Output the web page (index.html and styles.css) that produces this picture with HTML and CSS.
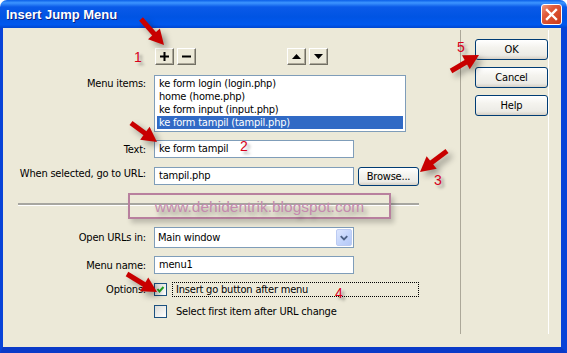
FILE: index.html
```html
<!DOCTYPE html>
<html lang="en">
<head>
    <meta charset="UTF-8">
    <title>Insert Jump Menu</title>
    <link rel="stylesheet" href="styles.css">
</head>
<body>
    <div class="window">
        <div class="titlebar">
            <span class="title">Insert Jump Menu</span>
            <span class="close">
                <svg width="21" height="21" viewBox="0 0 21 21"><path d="M6 6 L15 15 M15 6 L6 15" stroke="#fff" stroke-width="2.4" stroke-linecap="square"/></svg>
            </span>
        </div>

        <div class="client">
            <div class="main">
                <div class="row tools-row">
                    <div class="label"></div>
                    <div class="tools">
                        <span class="tool"><svg width="11" height="11" viewBox="0 0 11 11"><path d="M5.5 1 V10 M1 5.5 H10" stroke="#000" stroke-width="2"/></svg></span>
                        <span class="tool"><svg width="11" height="11" viewBox="0 0 11 11"><path d="M1 5.5 H10" stroke="#000" stroke-width="2"/></svg></span>
                    </div>
                    <div class="tools move">
                        <span class="tool"><svg width="11" height="11" viewBox="0 0 11 11"><path d="M1 8 L5.5 3 L10 8 Z" fill="#000"/></svg></span>
                        <span class="tool"><svg width="11" height="11" viewBox="0 0 11 11"><path d="M1 3 L5.5 8 L10 3 Z" fill="#000"/></svg></span>
                    </div>
                </div>

                <div class="row items-row">
                    <div class="label top">Menu items:</div>
                    <ul class="listbox">
                        <li>ke form login (login.php)</li>
                        <li>home (home.php)</li>
                        <li>ke form input (input.php)</li>
                        <li class="selected">ke form tampil (tampil.php)</li>
                    </ul>
                </div>

                <div class="row text-row">
                    <div class="label">Text:</div>
                    <div class="field">ke form tampil</div>
                </div>

                <div class="row url-row">
                    <div class="label">When selected, go to URL:</div>
                    <div class="field">tampil.php</div>
                    <span class="btn browse">Browse...</span>
                </div>

                <div class="separator"></div>

                <div class="row open-row">
                    <div class="label">Open URLs in:</div>
                    <div class="select">
                        <span>Main window</span>
                        <span class="drop"><svg width="15" height="17" viewBox="0 0 15 17"><path d="M4 7 L7.5 10.5 L11 7" stroke="#4d6185" stroke-width="2" fill="none"/></svg></span>
                    </div>
                </div>

                <div class="row name-row">
                    <div class="label">Menu name:</div>
                    <div class="field">menu1</div>
                </div>

                <div class="row option-row">
                    <div class="label">Options:</div>
                    <span class="check"><svg width="11" height="11" viewBox="0 0 11 11"><path d="M2.5 5 L4.5 7.5 L8.5 3" stroke="#21a121" stroke-width="2" fill="none"/></svg></span>
                    <span class="option-text focused">Insert go button after menu</span>
                </div>

                <div class="row option-row second">
                    <div class="label"></div>
                    <span class="check"></span>
                    <span class="option-text">Select first item after URL change</span>
                </div>
            </div>

            <div class="side">
                <span class="btn">OK</span>
                <span class="btn">Cancel</span>
                <span class="btn">Help</span>
            </div>
        </div>

        <!-- annotations drawn over the screenshot -->
        <div class="watermark">www.dehidentrik.blogspot.com</div>
        <svg class="arrows" width="567" height="353" viewBox="0 0 567 353">
            <g fill="#c80000" stroke="#c80000">
                <line x1="141" y1="19" x2="156" y2="36" stroke-width="5"/>
                <polygon points="0,0 -15,-8 -15,8" stroke="none" transform="translate(164 45) rotate(48)"/>

                <line x1="131" y1="123" x2="146" y2="134" stroke-width="5"/>
                <polygon points="0,0 -15,-8 -15,8" stroke="none" transform="translate(157 142) rotate(36)"/>

                <line x1="447" y1="151" x2="431" y2="163" stroke-width="5"/>
                <polygon points="0,0 -15,-8 -15,8" stroke="none" transform="translate(420 172) rotate(141)"/>

                <line x1="127" y1="274" x2="145" y2="285" stroke-width="5"/>
                <polygon points="0,0 -15,-8 -15,8" stroke="none" transform="translate(157 292) rotate(31)"/>

                <line x1="451" y1="71" x2="468" y2="61" stroke-width="5"/>
                <polygon points="0,0 -15,-8 -15,8" stroke="none" transform="translate(479 55) rotate(-29)"/>
            </g>
        </svg>
        <span class="note n1">1</span>
        <span class="note n2">2</span>
        <span class="note n3">3</span>
        <span class="note n4">4</span>
        <span class="note n5">5</span>
    </div>
</body>
</html>
```

FILE: styles.css
```css
body {
    margin: 0;
    font-family: "DejaVu Sans Condensed", "Liberation Sans", sans-serif;
    font-size: 11px;
    letter-spacing: -0.2px;
    color: #000;
    background: #fff;
}
.window {
    position: relative;
    width: 567px;
    height: 353px;
    overflow: hidden;
}
.titlebar {
    height: 28px;
    display: flex;
    align-items: center;
    justify-content: space-between;
    padding: 0 5px 0 6px;
    box-sizing: border-box;
    border-radius: 7px 7px 0 0;
    background: linear-gradient(#0a5fe8 0%, #3d95ff 10%, #0a5ae8 25%, #0054e3 60%, #0058ee 88%, #0046d0 100%);
}
.title {
    font-family: "Liberation Sans", Arial, sans-serif;
    font-weight: bold;
    font-size: 13px;
    letter-spacing: 0;
    color: #fff;
    text-shadow: 1px 1px 0 #0a1e80;
}
.close {
    width: 21px;
    height: 21px;
    margin-top: 1px;
    border: 1px solid #fff;
    border-radius: 3px;
    box-sizing: border-box;
    background: linear-gradient(135deg, #f09a80 0%, #e05a3a 35%, #cc3a1a 100%);
    display: flex;
    align-items: center;
    justify-content: center;
}
.close svg {
    margin: -1px;
}
.client {
    height: 325px;
    box-sizing: border-box;
    background-color: #ece9d8;
    border-left: 3px solid #0843d8;
    border-right: 6px solid #0843d8;
    border-bottom: 6px solid #0a3ac8;
    display: flex;
}
.main {
    width: 457px;
    padding-top: 20px;
}
.row {
    display: flex;
    align-items: center;
}
.label {
    width: 143px;
    margin-right: 8px;
    text-align: right;
    flex-shrink: 0;
}
.label.top {
    align-self: flex-start;
    padding-top: 2px;
}

/* toolbar buttons */
.tools-row {
    height: 17px;
}
.tools {
    display: flex;
    gap: 3px;
    margin-left: 1px;
}
.tools.move {
    margin-left: 91px;
}
.tool {
    width: 19px;
    height: 17px;
    box-sizing: border-box;
    background-color: #ece9d8;
    border-top: 1px solid #fff;
    border-left: 1px solid #fff;
    border-right: 1px solid #716f64;
    border-bottom: 1px solid #716f64;
    box-shadow: inset -1px -1px 0 #aca899;
    display: flex;
    align-items: center;
    justify-content: center;
}

/* list box */
.items-row {
    margin-top: 10px;
}
.listbox {
    list-style: none;
    margin: 0;
    padding: 1px 2px;
    width: 252px;
    height: 57px;
    box-sizing: border-box;
    background: #fff;
    border: 1px solid #7f9db9;
}
.listbox li {
    height: 13px;
    line-height: 13px;
    padding-left: 2px;
    white-space: nowrap;
}
.listbox li.selected {
    background-color: #316ac5;
    color: #fff;
}

/* text fields */
.field {
    width: 200px;
    height: 18px;
    box-sizing: border-box;
    border: 1px solid #7f9db9;
    background: #fff;
    padding-left: 4px;
    line-height: 16px;
}
.text-row {
    margin-top: 8px;
}
.url-row {
    margin-top: 9px;
    align-items: flex-start;
}
.btn {
    display: flex;
    align-items: center;
    justify-content: center;
    box-sizing: border-box;
    border: 1px solid #003c74;
    border-radius: 3px;
    background: linear-gradient(#ffffff 0%, #f4f3ee 40%, #ecebe6 80%, #d6d0c5 100%);
}
.browse {
    width: 61px;
    height: 19px;
    margin-left: 4px;
}
.separator {
    margin: 17px 0 0 15px;
    width: 401px;
    height: 2px;
    background-color: #a7a6a0;
    border-bottom: 1px solid #fff;
}

/* select */
.open-row {
    margin-top: 21px;
}
.select {
    width: 200px;
    height: 21px;
    box-sizing: border-box;
    border: 1px solid #7f9db9;
    background: #fff;
    display: flex;
    align-items: center;
    justify-content: space-between;
    padding: 1px 1px 1px 3px;
}
.drop {
    width: 16px;
    height: 17px;
    border-radius: 2px;
    background: linear-gradient(135deg, #dde6fe 0%, #c1d3fb 60%, #b4c8f6 100%);
    border: 1px solid #bccbf2;
    box-sizing: border-box;
    display: flex;
    align-items: center;
    justify-content: center;
}
.name-row {
    margin-top: 8px;
}

/* checkboxes */
.option-row {
    margin-top: 8px;
    height: 15px;
}
.option-row.second {
    margin-top: 7px;
}
.check {
    width: 13px;
    height: 13px;
    box-sizing: border-box;
    border: 1px solid #1c5180;
    background: linear-gradient(135deg, #dcdcd7 0%, #fff 100%);
    display: flex;
    align-items: center;
    justify-content: center;
}
.option-text {
    margin-left: 5px;
    padding: 0 3px;
    height: 15px;
    line-height: 13px;
    box-sizing: border-box;
    border: 1px solid transparent;
}
.option-text.focused {
    width: 247px;
    border: 1px dotted #000;
}

/* right column */
.side {
    margin-top: 2px;
    height: 304px;
    border-left: 1px solid #aca899;
    box-shadow: 1px 0 0 #fff;
    padding: 9px 0 0 14px;
    box-sizing: border-box;
    display: flex;
    flex-direction: column;
    gap: 7px;
}
.side .btn {
    width: 73px;
    height: 21px;
}

/* annotations */
.watermark {
    position: absolute;
    left: 128px;
    top: 193px;
    width: 263px;
    height: 26px;
    box-sizing: border-box;
    border: 2px solid #b8809e;
    font-family: "Liberation Sans", Arial, sans-serif;
    font-size: 15.5px;
    letter-spacing: 0;
    color: #c48aae;
    text-align: center;
    line-height: 23px;
    text-shadow: 3px 4px 4px rgba(0, 0, 0, 0.35);
    box-shadow: 3px 4px 5px rgba(0, 0, 0, 0.2);
}
.arrows {
    position: absolute;
    left: 0;
    top: 0;
    pointer-events: none;
    filter: drop-shadow(4px 4px 3px rgba(0, 0, 0, 0.35));
}
.note {
    position: absolute;
    font-family: "Liberation Sans", Arial, sans-serif;
    font-size: 14px;
    letter-spacing: 0;
    color: #d8001a;
    text-shadow: 3px 3px 3px rgba(0, 0, 0, 0.35);
}
.n1 { left: 134px; top: 49px; }
.n2 { left: 240px; top: 138px; }
.n3 { left: 434px; top: 172px; }
.n4 { left: 335px; top: 285px; }
.n5 { left: 457px; top: 39px; }
```
